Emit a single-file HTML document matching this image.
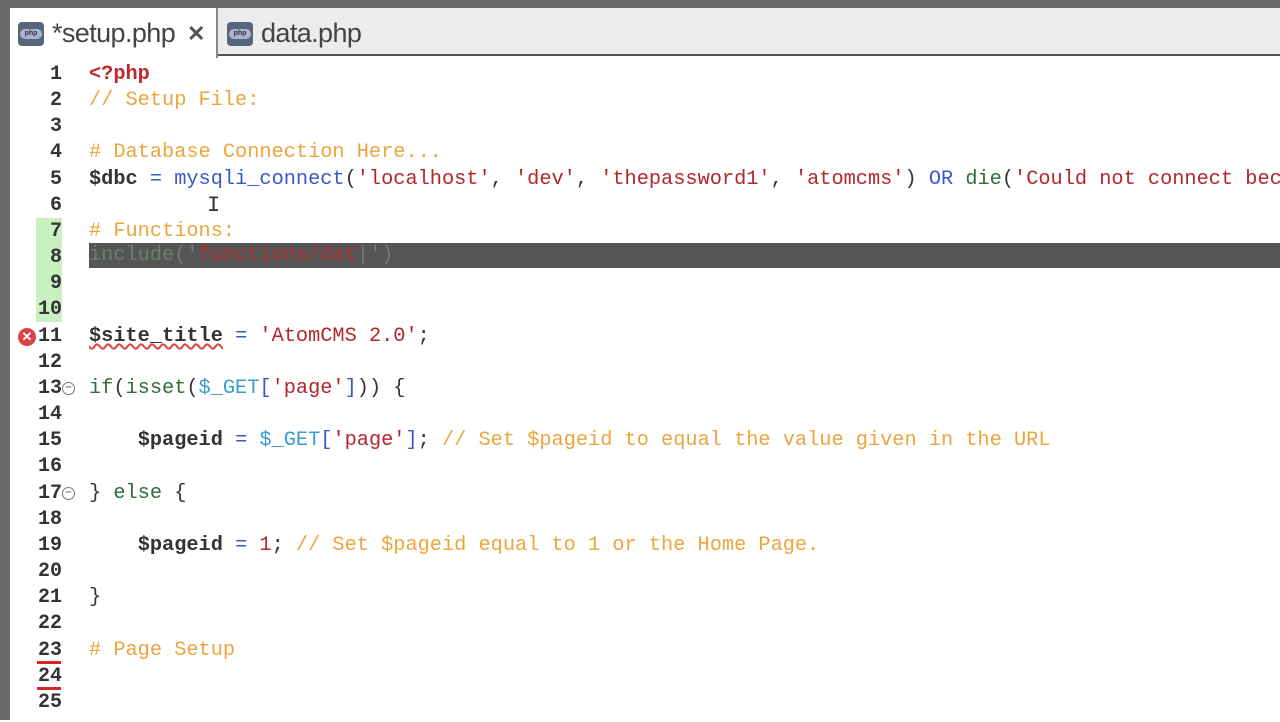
<!DOCTYPE html>
<html><head><meta charset="utf-8"><style>
*{margin:0;padding:0;box-sizing:border-box}
body{width:1280px;height:720px;overflow:hidden;background:#fff;position:relative;font-family:"Liberation Mono",monospace}
.topbar{position:absolute;left:0;top:0;width:1280px;height:8px;background:#6a6a6a}
.leftbar{position:absolute;left:0;top:0;width:10px;height:720px;background:#6a6a6a}
.tabrow{position:absolute;left:10px;top:8px;width:1270px;height:48px;background:#ececec;border-bottom:2px solid #555}
.tab1{position:absolute;left:10px;top:8px;width:208px;height:50px;background:#fff;border-right:2px solid #888}
.tabt{position:absolute;top:18px;font-family:"Liberation Sans",sans-serif;font-size:27px;color:#444;letter-spacing:-0.6px}
.ico{position:absolute;top:22px;width:26px;height:24px;background:#59657a;border-radius:4px}
.ico span{position:absolute;left:2px;top:7px;width:22px;height:10px;background:#aab4d0;border-radius:5px;font:bold 7px "Liberation Sans",sans-serif;color:#334;text-align:center;line-height:10px}
.l{position:absolute;left:0;top:2px;width:1280px;height:720px}
.ln{position:absolute;left:20px;width:42px;text-align:right;font-size:20px;font-weight:bold;color:#333;line-height:26px}
.code{position:absolute;left:89px;font-size:20.3px;line-height:26px;white-space:pre;color:#333}
.c{color:#eca53c}.s{color:#b3262c}.f{color:#3a58c8}.k{color:#2f6d3e}.v{color:#333;font-weight:bold}.g{color:#3a9ad6}.t{color:#c1272d;font-weight:bold}
.green{position:absolute;left:36px;top:218px;width:26px;height:104px;background:#c8f0c0}
.hl{position:absolute;left:89px;top:243px;width:1191px;height:25px;background:#555}
</style></head><body>
<div class="topbar"></div><div class="leftbar"></div>
<div class="tabrow"></div>
<div class="tab1"></div>
<div class="ico" style="left:18px"><span>php</span></div>
<div class="tabt" style="left:52px">*setup.php</div>
<div class="tabt" style="left:187px;font-weight:bold;color:#555;font-size:22px;top:21px">✕</div>
<div class="ico" style="left:227px"><span>php</span></div>
<div class="tabt" style="left:261px">data.php</div>
<div class="green"></div>
<div class="hl"></div>
<div class="l">
<div class="ln" style="top:60px">1</div>
<div class="ln" style="top:86px">2</div>
<div class="ln" style="top:112px">3</div>
<div class="ln" style="top:138px">4</div>
<div class="ln" style="top:165px">5</div>
<div class="ln" style="top:191px">6</div>
<div class="ln" style="top:217px">7</div>
<div class="ln" style="top:243px">8</div>
<div class="ln" style="top:269px">9</div>
<div class="ln" style="top:295px">10</div>
<div class="ln" style="top:322px">11</div>
<div class="ln" style="top:348px">12</div>
<div class="ln" style="top:374px">13</div>
<div class="ln" style="top:400px">14</div>
<div class="ln" style="top:426px">15</div>
<div class="ln" style="top:452px">16</div>
<div class="ln" style="top:479px">17</div>
<div class="ln" style="top:505px">18</div>
<div class="ln" style="top:531px">19</div>
<div class="ln" style="top:557px">20</div>
<div class="ln" style="top:583px">21</div>
<div class="ln" style="top:609px">22</div>
<div class="ln" style="top:636px;">23</div>
<div class="ln" style="top:662px">24</div>
<div class="ln" style="top:688px">25</div>
<div style="position:absolute;left:37px;top:659px;width:24px;height:3px;background:#d22"></div>
<div style="position:absolute;left:37px;top:685px;width:24px;height:3px;background:#d22"></div>
<div style="position:absolute;left:18px;top:326px;width:18px;height:18px;border-radius:50%;background:#d9434a;color:#fff;font:bold 13px/18px 'Liberation Sans',sans-serif;text-align:center">✕</div>
<div style="position:absolute;left:62px;top:380px;width:13px;height:13px;border-radius:50%;border:1.5px solid #777;font:bold 11px/9px 'Liberation Sans';text-align:center;color:#777">–</div>
<div style="position:absolute;left:62px;top:485px;width:13px;height:13px;border-radius:50%;border:1.5px solid #777;font:bold 11px/9px 'Liberation Sans';text-align:center;color:#777">–</div>
<div class="code" style="top:60px"><span class="t">&lt;?php</span></div>
<div class="code" style="top:86px"><span class="c">// Setup File:</span></div>
<div class="code" style="top:138px"><span class="c"># Database Connection Here...</span></div>
<div class="code" style="top:165px"><span class="v">$dbc</span> <span class="f">=</span> <span class="f">mysqli_connect</span>(<span class="s">'localhost'</span>, <span class="s">'dev'</span>, <span class="s">'thepassword1'</span>, <span class="s">'atomcms'</span>) <span class="f">OR</span> <span class="k">die</span>(<span class="s">'Could not connect because</span></div>
<div class="code" style="top:191px;left:207px;font-size:22px">I</div>
<div class="code" style="top:217px"><span class="c"># Functions:</span></div>
<div class="code" style="top:241px"><span style="color:#6b7d6b">include</span><span style="color:#777">('</span><span style="color:#a33">functions/dat</span><span style="color:#777">|')</span></div>
<div class="code" style="top:322px"><span class="v" style="text-decoration:underline wavy #d44">$site_title</span> <span class="f">=</span> <span class="s">'AtomCMS 2.0'</span>;</div>
<div class="code" style="top:374px"><span class="k">if</span>(<span class="k">isset</span>(<span class="g">$_GET</span><span class="f">[</span><span class="s">'page'</span><span class="f">]</span>)) {</div>
<div class="code" style="top:426px">    <span class="v">$pageid</span> <span class="f">=</span> <span class="g">$_GET</span><span class="f">[</span><span class="s">'page'</span><span class="f">]</span>; <span class="c">// Set $pageid to equal the value given in the URL</span></div>
<div class="code" style="top:479px">} <span class="k">else</span> {</div>
<div class="code" style="top:531px">    <span class="v">$pageid</span> <span class="f">=</span> <span class="s">1</span>; <span class="c">// Set $pageid equal to 1 or the Home Page.</span></div>
<div class="code" style="top:583px">}</div>
<div class="code" style="top:636px"><span class="c"># Page Setup</span></div>
</div>
</body></html>
